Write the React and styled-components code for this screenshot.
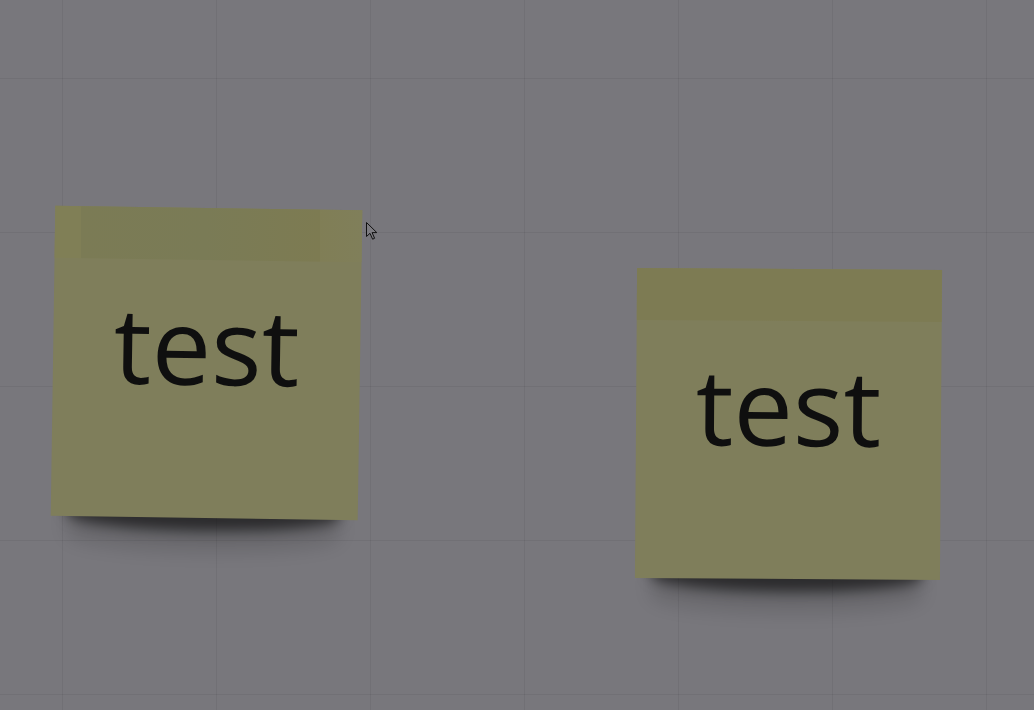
import styled, { createGlobalStyle } from "styled-components";

const GlobalStyle = createGlobalStyle`
    html, body {
        margin: 0;
        padding: 0;
        overflow: hidden;
    }
    body {
        font-family: "Open Sans", "Noto Sans", sans-serif;
    }
`;

const Board = styled.div`
    position: relative;
    width: 1034px;
    height: 710px;
    overflow: hidden;
    background-color: #78777c;
    background-image:
        linear-gradient(to right, rgba(0, 0, 0, 0.06) 1px, transparent 1px),
        linear-gradient(to bottom, rgba(0, 0, 0, 0.06) 1px, transparent 1px);
    background-size: 154px 154px;
    background-position: 62px 78px;
`;

const Note = styled.div`
    position: absolute;
    left: ${({ x }) => x}px;
    top: ${({ y }) => y}px;
    width: ${({ w }) => w}px;
    height: 310px;
    transform: rotate(${({ tilt }) => tilt}deg);
`;

const Shadow = styled.div`
    position: absolute;
    left: 16px;
    right: 18px;
    bottom: 4px;
    height: 40px;
    border-radius: 0 0 50% 50% / 0 0 16px 16px;
    box-shadow:
        0 17px 13px rgba(0, 0, 0, 0.6),
        0 38px 18px rgba(0, 0, 0, 0.12);
`;

const Paper = styled.div`
    position: relative;
    width: 100%;
    height: 100%;
    display: flex;
    flex-direction: column;
    align-items: center;
    background-color: #7f7e5b;
`;

const Tape = styled.div`
    align-self: stretch;
    height: 52px;
    background: ${({ band }) => band};
`;

const Label = styled.span`
    margin-top: 31px;
    font-size: 106px;
    line-height: 106px;
    font-weight: 400;
    color: #0f0f0f;
`;

const Pointer = styled.svg`
    position: absolute;
    left: 365px;
    top: 221px;
    width: 14px;
    height: 20px;
`;

const notes = [
    {
        id: 1,
        x: 53,
        y: 208,
        w: 307,
        tilt: 0.85,
        band: "linear-gradient(to right, #807f56 0, #807f56 26px, #7b7b55 26px, #7a7b56 150px, #7d7b52 265px, #807e56 265px, #807f5a 100%)",
    },
    {
        id: 2,
        x: 636,
        y: 269,
        w: 305,
        tilt: 0.4,
        band: "linear-gradient(to bottom, #7d7b53 0, #7d7b53 100%)",
    },
];

const App = () => {
    return (
        <>
            <GlobalStyle />
            <Board>
                {notes.map((n) => (
                    <Note key={n.id} x={n.x} y={n.y} w={n.w} tilt={n.tilt}>
                        <Shadow />
                        <Paper>
                            <Tape band={n.band} />
                            <Label>test</Label>
                        </Paper>
                    </Note>
                ))}
                <Pointer viewBox="0 0 14 20">
                    <path
                        d="M1.5 1.5 L1.5 15.5 L5 12.3 L7.6 18.2 L9.6 17.3 L7.1 11.6 L11.8 11.6 Z"
                        fill="#7c7b80"
                        stroke="#111"
                        strokeWidth="1"
                        strokeLinejoin="round"
                    />
                </Pointer>
            </Board>
        </>
    );
};

export default App;
